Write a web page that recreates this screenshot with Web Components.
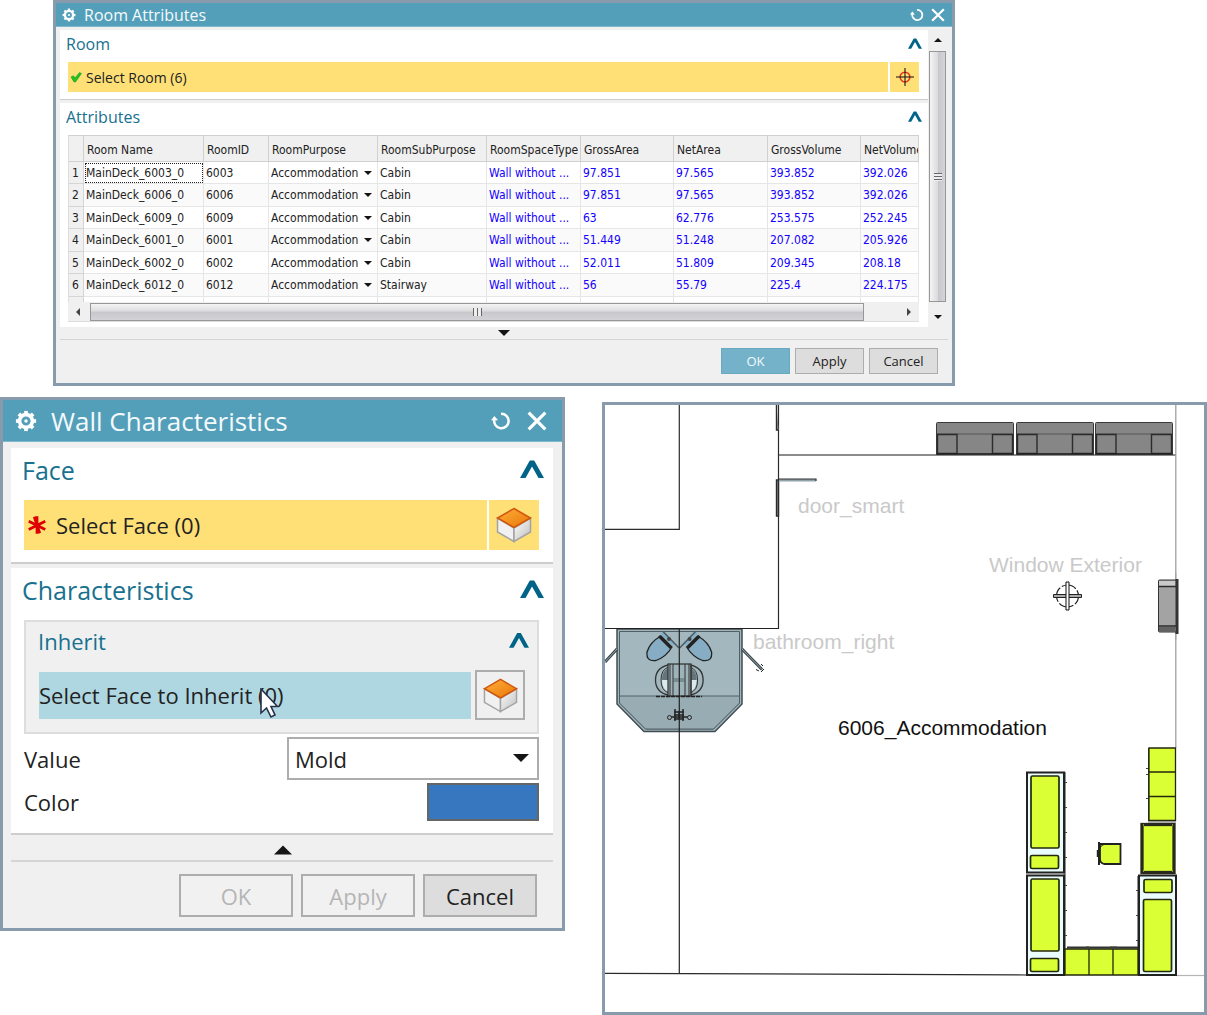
<!DOCTYPE html>
<html lang="en">
<head>
<meta charset="utf-8">
<title>Room Attributes</title>
<style>
  body { margin: 0; background: #fff; color: #222; font-family: "Open Sans", "Noto Sans", sans-serif; }
  main { display: flex; flex-direction: column; gap: 11px; }
  .top { margin: 0 252px 0 53px; --select: 14px; }
  .bottom { display: grid; grid-template-columns: 565fr 605fr; gap: 37px; align-items: start; }
  floor-plan { margin-top: 5px; }
  .large {
    --title: 26px; --heading: 25px; --text: 22px; --select: 22px; --bar-pad: 12px; --tool-pad: 15px; --tool: 20px; --gear: 22px;
    --body-pad: 6px 9px 0 8px; --gap: 4px; --card-pad: 0 14px 12px 13px; --head: 52px; --lift: 8px; --head-out: -5px;
    --chevron: 24px; --row: 50px; --foot-arrow: 21px; --arrow: 18px; --foot-pad: 12px 16px 11px;
    --foot-gap: 8px; --btn-w: 114px; --btn-h: 43px; --tool-gap: 16px; --icon-gap: 14px; --edge: 2px;
  }
</style>
</head>
<body>
<main>
  <nx-dialog class="top" heading="Room Attributes" fold="down">
    <nx-scroll-pane>
      <nx-section heading="Room">
        <nx-selection text="Select Room (6)" mark="check" tool="target"></nx-selection>
      </nx-section>
      <nx-section heading="Attributes" last>
        <attribute-table></attribute-table>
      </nx-section>
    </nx-scroll-pane>
    <nx-button slot="actions" kind="primary">OK</nx-button>
    <nx-button slot="actions">Apply</nx-button>
    <nx-button slot="actions">Cancel</nx-button>
  </nx-dialog>
  <div class="bottom">
    <nx-dialog class="large" heading="Wall Characteristics" fold="up">
      <nx-section heading="Face">
        <nx-selection text="Select Face (0)" mark="required" tool="cube"></nx-selection>
      </nx-section>
      <nx-section heading="Characteristics">
        <inherit-group></inherit-group>
        <wall-fields></wall-fields>
      </nx-section>
      <nx-button slot="actions" kind="off">OK</nx-button>
      <nx-button slot="actions" kind="off">Apply</nx-button>
      <nx-button slot="actions">Cancel</nx-button>
    </nx-dialog>
    <floor-plan></floor-plan>
  </div>
</main>
<script>
const teeth = [0, 45, 90, 135, 180, 225, 270, 315]
  .map(a => `<rect x="10" y="1" width="4" height="5" transform="rotate(${a} 12 12)"/>`).join('');
const icons = {
  gear: `<svg viewBox="0 0 24 24" fill="#fff">${teeth}<circle cx="12" cy="12" r="7" fill="none" stroke="#fff" stroke-width="4"/><circle cx="12" cy="12" r="1.9"/></svg>`,
  reset: `<svg viewBox="0 0 24 24"><path d="M12 3.300A8.700 8.700 0 1 1 4 10" fill="none" stroke="#fff" stroke-width="3"/><path d="M0 11L4 6L8.500 11Z" fill="#fff"/></svg>`,
  close: `<svg viewBox="0 0 24 24"><path d="M2 2L22 22M22 2L2 22" stroke="#fff" stroke-width="3.8"/></svg>`,
  chevron: `<svg viewBox="0 0 24 24"><path d="M0 20L9.800 2.500H14.200L24 20H18.500L12 8.500L5.500 20Z" fill="#006487"/></svg>`,
  check: `<svg viewBox="0 0 24 24"><path d="M2 12L7 9.500L10 14L19 3L23 5L11 22H8Z" fill="#1fc41f" stroke="#12881c"/></svg>`,
  required: `<svg viewBox="0 0 24 24"><path d="M12 2.500V21.500M3 8L21 17M3 17L21 8M9 3L15 21" stroke="#de0000" stroke-width="3"/></svg>`,
  target: `<svg viewBox="0 0 24 24"><circle cx="12" cy="12" r="6.5" fill="none" stroke="#e8321e" stroke-width="2"/><path d="M12 0V24M0 12H24" stroke="#111" stroke-width="1.4"/></svg>`,
  cube: `<svg viewBox="0 0 36 36"><defs><linearGradient id="o" x2="1" y2="1"><stop stop-color="#ffb03a"/><stop offset="1" stop-color="#e87508"/></linearGradient><linearGradient id="s" x2="1" y2="1"><stop stop-color="#fff"/><stop offset="1" stop-color="#bdbdbd"/></linearGradient></defs><path d="M1.500 11V25L18 34.500V21Z" fill="#f1f1f1" stroke="#a3a3a3" stroke-width="1.5"/><path d="M34.500 11V25L18 34.500V21Z" fill="url(#s)" stroke="#a3a3a3" stroke-width="1.5"/><path d="M18 1.500L34.500 11L18 20.500L1.500 11Z" fill="url(#o)" stroke="#d0560d" stroke-width="1.500"/></svg>`,
  down: `<svg viewBox="0 0 24 24"><path d="M0 6H24L12 18Z" fill="#151515"/></svg>`,
  up: `<svg viewBox="0 0 24 24"><path d="M0 18H24L12 6Z" fill="#151515"/></svg>`,
  left: `<svg viewBox="0 0 24 24"><path d="M18 0V24L6 12Z" fill="#444"/></svg>`,
  right: `<svg viewBox="0 0 24 24"><path d="M6 0V24L18 12Z" fill="#444"/></svg>`
};
const base = `*{box-sizing:border-box}button{font:inherit;color:inherit;margin:0;padding:0;border:0;background:none;display:grid;place-items:center}svg{display:block;width:100%;height:100%}`;
class Base extends HTMLElement {
  connectedCallback() {
    if (this.shadowRoot) return;
    this.attachShadow({ mode: 'open' }).innerHTML = `<style>${base}${this.css()}</style>${this.html()}`;
  }
  at(n) { return this.getAttribute(n) || ''; }
}
customElements.define('nx-icon', class extends Base {
  css() { return `:host{display:block;flex:none;width:var(--size,12px);height:var(--size,12px)}`; }
  html() { return icons[this.at('name')]; }
});
customElements.define('nx-button', class extends Base {
  css() { return `:host{display:block}
    button{width:var(--btn-w,69px);height:var(--btn-h,26px);border:var(--edge,1px) solid #adadad;background:#ddd;font-size:var(--text,13px);line-height:1}
    .primary{background:#73b2c8;border-color:#69aac1;color:#f3fafc}.off{background:#f1f1f1;color:#b5b5b5}`; }
  html() { return `<button type="button" class="${this.at('kind')}"><span><slot></slot></span></button>`; }
});
customElements.define('nx-dialog', class extends Base {
  css() { return `:host{display:block;border:3px solid #879bac;background:#f0f0f0}
    header{display:flex;align-items:center;gap:var(--icon-gap,8px);height:24px;padding:0 var(--tool-pad,7px) 0 var(--bar-pad,6px);background:#539fb9;border-bottom:1px solid #7fb9cc;color:#f4fafc}
    :host(.large) header{height:42px}
    h1{flex:1;margin:0;font-size:var(--title,16px);font-weight:400;line-height:1;white-space:nowrap}
    .tools{display:flex;gap:var(--tool-gap,7px)} .tools nx-icon{--size:var(--tool,14px)} header > nx-icon{--size:var(--gear,14px)}
    .body{padding:var(--body-pad,3px 4px 0)}
    .fold{display:grid;place-items:center;height:var(--foot-arrow,12px)} .fold nx-icon{--size:var(--arrow,12px)}
    .rule{margin:0 4px;border-top:var(--edge,1px) solid #d5d5d5} :host(.large) .rule{margin:0 9px 0 8px}
    footer{display:flex;justify-content:flex-end;gap:var(--foot-gap,5px);padding:var(--foot-pad,8px 14px 9px)}
    :host(.large) footer{padding-right:25px}`; }
  html() { return `<header><nx-icon name="gear"></nx-icon><h1>${this.at('heading')}</h1><div class="tools"><button type="button" aria-label="Reset"><nx-icon name="reset"></nx-icon></button><button type="button" aria-label="Close"><nx-icon name="close"></nx-icon></button></div></header>
    <div class="body"><slot></slot></div><div class="fold"><nx-icon name="${this.at('fold')}"></nx-icon></div><div class="rule"></div><footer><slot name="actions"></slot></footer>`; }
});
customElements.define('nx-section', class extends Base {
  css() { return `:host{display:block;background:#fff;padding:var(--card-pad,0 9px 7px 8px);border-bottom:var(--edge,1px) solid #cdcdcd;margin-bottom:var(--gap,3px)}
    :host([last]){border:0;margin:0;padding-bottom:5px}
    .head{display:flex;align-items:center;justify-content:space-between;height:var(--head,32px);padding-bottom:var(--lift,5px);margin:0 var(--head-out,-3px) 0 -2px}
    h2{margin:0;font-size:var(--heading,16px);font-weight:400;line-height:1;color:#17718f} nx-icon{--size:var(--chevron,14px)}`; }
  html() { return `<div class="head"><h2>${this.at('heading')}</h2><button type="button" aria-label="Collapse"><nx-icon name="chevron"></nx-icon></button></div><slot></slot>`; }
});
customElements.define('nx-selection', class extends Base {
  css() { return `:host{display:flex;gap:2px;height:var(--row,30px);font-size:var(--select)}
    .text{flex:1;display:flex;align-items:center;gap:4px;padding-left:2px;background:#ffe077}
    .required{gap:8px} nx-icon{--size:12px} .required nx-icon{--size:22px}
    button{width:var(--row,29px);background:#ffe077} button nx-icon{--size:18px} .cube nx-icon{--size:36px}`; }
  html() { return `<div class="text ${this.at('mark')}"><nx-icon name="${this.at('mark')}"></nx-icon><span>${this.at('text')}</span></div><button type="button" class="${this.at('tool')}" aria-label="Pick"><nx-icon name="${this.at('tool')}"></nx-icon></button>`; }
});
customElements.define('inherit-group', class extends Base {
  css() { return `:host{display:block;background:#f0f0f0;border:2px solid #ddd;padding:0 12px 12px 13px;font-size:var(--text)}
    .head{display:flex;align-items:center;justify-content:space-between;height:48px;padding-bottom:10px;margin:0 -4px 0 -1px;color:#17718f}
    h3{margin:0;font-size:22px;line-height:1;font-weight:400} .head nx-icon{--size:20px}
    .row{display:flex;align-items:center;gap:4px} .text{position:relative;flex:1;height:47px;display:flex;align-items:center;background:#afd7e1}
    .pick{width:50px;height:50px;border:2px solid #adadad} .pick nx-icon{--size:35px}
    .cursor{position:absolute;left:220px;top:16px;width:20px;height:31px}`; }
  html() { return `<div class="head"><h3>Inherit</h3><button type="button" aria-label="Collapse"><nx-icon name="chevron"></nx-icon></button></div>
    <div class="row"><div class="text"><span>Select Face to Inherit (0)</span><svg class="cursor" viewBox="0 0 20 31"><path d="M2 1V25L7.500 20L12 29L16 27L12 18.500H18.500Z" fill="#fff" stroke="#27304a" stroke-width="1.600"/></svg></div><button type="button" class="pick" aria-label="Pick face"><nx-icon name="cube"></nx-icon></button></div>`; }
});
customElements.define('wall-fields', class extends Base {
  css() { return `:host{display:flex;flex-direction:column;gap:3px;padding-top:3px;font-size:var(--text)}
    div{display:flex;align-items:center;justify-content:space-between}
    .pick{position:relative;width:252px}
    select{appearance:none;width:100%;height:43px;border:2px solid #adadad;background:#fff;color:inherit;font:inherit;padding:0 6px;border-radius:0}
    .pick nx-icon{position:absolute;right:10px;top:13px;--size:16px;pointer-events:none}
    input{appearance:none;width:112px;height:38px;padding:0;border:2px solid #666;background:#3677c0}
    input::-webkit-color-swatch-wrapper{padding:0} input::-webkit-color-swatch{border:0;border-radius:0}`; }
  html() { return `<div><label for="v">Value</label><span class="pick"><select id="v"><option>Mold</option></select><nx-icon name="down"></nx-icon></span></div>
    <div><label for="c">Color</label><input id="c" type="color" value="#3677c0"></div>`; }
});
customElements.define('nx-scroll-pane', class extends Base {
  css() { return `:host{display:flex}.content{flex:1;min-width:0}
    .bar{display:flex;flex-direction:column;align-items:center;width:18px;margin-right:2px;padding:6px 0 6px 1px;gap:7px;--size:8px}
    .thumb{flex:1;width:17px;margin-bottom:4px;border:1px solid #979797;background:linear-gradient(90deg,#f4f4f4,#dcdcdf 50%,#c7c7cc 55%,#d4d4d8);display:grid;place-items:center}
    .thumb i{width:8px;height:8px;background:repeating-linear-gradient(#666 0 1px,#eee 1px 3px)}`; }
  html() { return `<div class="content"><slot></slot></div><div class="bar"><nx-icon name="up"></nx-icon><div class="thumb"><i></i></div><nx-icon name="down"></nx-icon></div>`; }
});
const rows = [
  ['MainDeck_6003_0', '6003', 'Cabin', '97.851', '97.565', '393.852', '392.026'],
  ['MainDeck_6006_0', '6006', 'Cabin', '97.851', '97.565', '393.852', '392.026'],
  ['MainDeck_6009_0', '6009', 'Cabin', '63', '62.776', '253.575', '252.245'],
  ['MainDeck_6001_0', '6001', 'Cabin', '51.449', '51.248', '207.082', '205.926'],
  ['MainDeck_6002_0', '6002', 'Cabin', '52.011', '51.809', '209.345', '208.18'],
  ['MainDeck_6012_0', '6012', 'Stairway', '56', '55.79', '225.4', '224.175']
];
customElements.define('attribute-table', class extends Base {
  css() { return `:host{display:block;font-family:"DejaVu Sans Condensed","Noto Sans",sans-serif;font-size:12px;line-height:16px}
    table{width:100%;table-layout:fixed;border-collapse:separate;border-spacing:0;border-top:1px solid #d0d0d0;border-left:1px solid #ddd}
    th,td{padding:0 0 0 2px;text-align:left;font-weight:400;white-space:nowrap;overflow:hidden;border-right:1px solid #e6e6e6;border-bottom:1px solid #e6e6e6}
    thead th{height:26px;padding:3px 0 0 3px;background:#f0f0f0;border-color:#d0d0d0}
    tbody tr{height:22px} tbody tr:nth-child(even){height:23px;background:#fafafa}
    tbody th{padding-left:3px;background:#f0f0f0;border-color:#d5d5d5} .v{color:#1400ff}
    tbody tr:nth-child(1) td:nth-child(2){outline:1px dotted #222;outline-offset:-2px}
    tbody tr.rest{height:5px} .rest td,.rest th{border-bottom:0}
    .pick{display:flex;align-items:center;padding-right:5px} .pick nx-icon{--size:8px}
    select{flex:1;min-width:0;appearance:none;font:inherit;color:inherit;padding:0;border:0;background:none;height:18px}
    .bar{display:flex;align-items:center;height:20px;padding:0 6px;gap:8px;--size:8px;background:#f0f0f0;border-bottom:1px solid #ddd}
    .track{flex:1;height:18px;padding-right:33px}.thumb{height:18px;border:1px solid #979797;background:linear-gradient(#f4f4f4,#dcdcdf 45%,#c7c7cc 50%,#d4d4d8);display:grid;place-items:center}
    .thumb i{width:9px;height:8px;background:repeating-linear-gradient(90deg,#666 0 1px,#eee 1px 4px)}`; }
  html() {
    const widths = [15, 120, 65, 109, 109, 94, 93, 94, 93];
    const heads = ['', 'Room Name', 'RoomID', 'RoomPurpose', 'RoomSubPurpose', 'RoomSpaceType', 'GrossArea', 'NetArea', 'GrossVolume', 'NetVolume'];
    return `<table><colgroup>${widths.map(w => `<col style="width:${w}px">`).join('')}<col></colgroup>
      <thead><tr>${heads.map(h => `<th scope="col">${h}</th>`).join('')}</tr></thead>
      <tbody>${rows.map((r, i) => `<tr><th scope="row">${i + 1}</th><td>${r[0]}</td><td>${r[1]}</td><td><div class="pick"><select aria-label="RoomPurpose"><option>Accommodation</option></select><nx-icon name="down"></nx-icon></div></td><td>${r[2]}</td><td class="v">Wall without ...</td>${r.slice(3).map(v => `<td class="v">${v}</td>`).join('')}</tr>`).join('')}
      <tr class="rest"><th></th>${'<td></td>'.repeat(9)}</tr></tbody></table>
      <div class="bar"><nx-icon name="left"></nx-icon><div class="track"><div class="thumb"><i></i></div></div><nx-icon name="right"></nx-icon></div>`;
  }
});
customElements.define('floor-plan', class extends Base {
  css() { return `:host{display:block;border:3px solid #879bac;background:#fff} text{font-family:"Liberation Sans",Arial,sans-serif;font-size:21px;fill:#c9c9c9} .name{fill:#111}`; }
  html() {
    const sofa = x => `<g transform="translate(${x} 422)" stroke="#3a3a3a" fill="#868686"><rect x=".5" y=".5" width="77" height="31.500" rx="1"/><path d="M1 12H77" stroke="#555"/><path d="M1.500 12.500H21V31.500H1.500ZM56.500 12.500H76.500V31.500H56.500Z" stroke="#2b2b2b" stroke-width="1.400"/><path d="M0 32H78" stroke="#222" stroke-width="1.500"/></g>`;
    const box = (x, y, w, h) => `<rect x="${x}" y="${y}" width="${w}" height="${h}" rx="1.500"/>`;
    const toilet = `<path d="M661 636L672 647Q666 657 656 660.500Q646 662 647 652Q650 642 661 636Z" fill="#86adc4" stroke="#222" stroke-width="1.300"/><path d="M659 636L671 648" stroke="#222" stroke-width="3"/><path d="M661.500 633L674 645" stroke="#84b0ca" stroke-width="3"/><path d="M663 631.500L679 648" stroke="#4a5960" stroke-width="1.500" fill="none"/><circle cx="669" cy="639" r="2" fill="#444"/>`;
    const basin = `<path d="M668 665Q655.500 668 655.500 680T668 695" fill="#a3b8be" stroke="#333" stroke-width="1.300"/><path d="M669 668Q662 670 662 680H669Z" fill="#65757b"/><path d="M669 680H662Q662 689 669 692Z" fill="#dbe9ed"/><path d="M669 667Q661 669 661 680T669 693" fill="none" stroke="#333"/>`;
    return `<svg viewBox="605 405 599 607" role="img">
      <g fill="none" stroke="#2b2b2b" stroke-width="1.200">
        <path d="M679.300 405V529.300H605M778.500 405V628.500H605"/>
        <path d="M779 455H1176" stroke="#666" stroke-width="1.600"/><path d="M1175.800 405V748" stroke="#a0a0a0" stroke-width="1.300"/>
        <path d="M605 973.300L1030 975"/><path d="M1176 975.500H1204" stroke="#b5b5b5"/>
        <path d="M776.500 405V430H778.500M776.500 480H778.500V516H776.500Z" fill="#869399" stroke-width="1.400"/>
        <path d="M779 480.300H816" stroke="#91a2aa" stroke-width="2.500"/><path d="M779 479H816V481" stroke="#333"/>
      </g>
      <path d="M617 629H742V704L715 731.500H644L617 704Z" fill="#9fb4bb" stroke="#424e53" stroke-width="1.500"/>
      <path d="M619.500 631.500H739.500V703L713.500 729H645.500L619.500 703Z" fill="#a3b8be" stroke="#526066"/>
      <path d="M619.500 696H739.500V703L713.500 729H645.500L619.500 703Z" fill="#98acb4" stroke="#526066"/>
      <g>${toilet}</g><g transform="translate(1358.600 0) scale(-1 1)">${toilet}</g>
      <g>${basin}</g><g transform="translate(1358.600 0) scale(-1 1)">${basin}</g>
      <rect x="668" y="664" width="23" height="32" fill="#9db2b9" stroke="#2d2d2d" stroke-width="1.200"/><path d="M670 664V696M673 664V696M685 664V696M689 664V696M691 665V695" stroke="#333"/><path d="M673 679H685M673 681H685" stroke="#566"/>
      <path d="M656 696.500H702" stroke="#222" stroke-width="1.500" stroke-dasharray="4 1"/>
      <path d="M675 709V721M683 709V721M674 712H684M674 715H684M674 719H684M671 717H688M679 711V719" stroke="#222" stroke-width="1.500"/><circle cx="669.500" cy="717.500" r="2" fill="#98acb4" stroke="#222"/><circle cx="689.500" cy="717.500" r="2" fill="#98acb4" stroke="#222"/>
      <path d="M679.300 629V973.300" stroke="#222" stroke-width="1.200"/><path d="M605 628.500H779" stroke="#222"/>
      <path d="M617 649L605 662M742 649L762 669.500" stroke="#3e494e" stroke-width="3"/><path d="M617 649L605 662M742 649L762 669.500" stroke="#94a5ac"/><path d="M756 669.500L759 671M761 664L763 666M761 672L764 669" stroke="#222"/>
      ${sofa(936)}${sofa(1016)}${sofa(1095)}
      <path d="M1175.800 573V640" stroke="#a0a0a0"/>
      <rect x="1158.500" y="580" width="18" height="52" rx="1" fill="#a3a3a3" stroke="#333"/><path d="M1159 581H1175V586H1159Z" fill="#cacaca"/><path d="M1159 627H1175V632H1159Z" fill="#626262"/><path d="M1158 586.500H1176M1158 626H1176" stroke="#2b2b2b" stroke-width="1.500"/><path d="M1177 579V634" stroke="#333" stroke-width="3"/>
      <circle cx="1067.500" cy="596" r="11" fill="none" stroke="#222" stroke-width="1.200" stroke-dasharray="9 2 6 .28"/>
      <path d="M1053.500 594.500H1081.500V597.500H1053.500Z" fill="#aaa" stroke="#222"/><path d="M1066 582H1069V610H1066Z" fill="#fff" stroke="#111"/>
      <g fill="#eafcfc" stroke="#222" stroke-width="2"><path d="M1027 772.500H1064V872.500H1027ZM1027 875.500H1064V975H1027ZM1139 875.500H1176V975H1139Z"/></g>
      <path d="M1064.500 772V975M1138.500 876V975" stroke="#222" stroke-width="2"/>
      <path d="M1067 947.500H1138M1149 748V821" stroke="#333" stroke-width="2"/><path d="M1141 874H1176M1027 874H1065M1148 822H1176" stroke="#8c8c8c"/>
      <g fill="#daff35" stroke="#24280c" stroke-width="1.700">
        ${box(1031, 776, 28, 72)}${box(1030.5, 855.5, 28, 13)}${box(1031, 879, 28, 72)}${box(1030.5, 958.5, 28, 13)}
        ${box(1144, 879.5, 28, 13)}${box(1143.5, 899.5, 28, 72)}
      </g>
      <g fill="#daff35" stroke="#24280c" stroke-width="1.300"><path d="M1065 949H1138V975H1065ZM1089 949V975M1113 949V975M1149 748H1175.500V820.500H1149ZM1149 772H1176M1149 796.500H1176"/></g>
      <rect x="1142" y="824.500" width="32" height="48" fill="#daff35" stroke="#28281c" stroke-width="3.300"/><path d="M1143 825H1144M1172 825H1173M1143 871H1144M1172 871H1173" stroke="#daff35"/>
      <path d="M1100 844H1120.500V864H1104Q1100 863 1100 859Z" fill="#daff35" stroke="#222" stroke-width="1.800"/><path d="M1099 842V865M1097.800 850V857" stroke="#222" stroke-width="2"/><path d="M1100 848Q1101 845 1105 844" stroke="#222" fill="none"/>
      <g stroke="#444"><path d="M1065 782.500H1067M1065 807.500H1067M1065 832.500H1067M1065 857.500H1067M1065 885.500H1067M1065 910.500H1067M1065 935.500H1067M1136 890.500H1138M1136 915.500H1138M1136 940.500H1138M1146 768.500H1148M1146 774.500H1148M1146 798.500H1148M1086 947H1089M1110 947H1117"/></g>
      <text x="798" y="513">door_smart</text><text x="989" y="572">Window Exterior</text><text x="753" y="649">bathroom_right</text><text class="name" x="838" y="735">6006_Accommodation</text>
    </svg>`;
  }
});
</script>
</body>
</html>
